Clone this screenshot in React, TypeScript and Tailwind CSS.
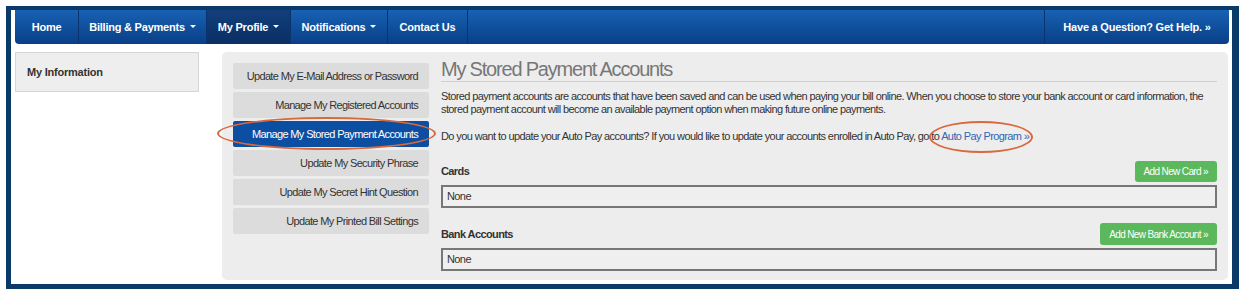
const subNav = [
  'Update My E-Mail Address or Password',
  'Manage My Registered Accounts',
  'Manage My Stored Payment Accounts',
  'Update My Security Phrase',
  'Update My Secret Hint Question',
  'Update My Printed Bill Settings',
]

const navItems = [
  { label: 'Home', w: 'w-[64px]', caret: false, active: false },
  { label: 'Billing & Payments', w: 'w-[128px]', caret: true, active: false },
  { label: 'My Profile', w: 'w-[84px]', caret: true, active: true },
  { label: 'Notifications', w: 'w-[97px]', caret: true, active: false },
  { label: 'Contact Us', w: 'w-[80px]', caret: false, active: false },
]

function Caret() {
  return <span className="inline-block ml-[5px] mb-[2px] w-0 h-0 border-x-[3px] border-x-transparent border-t-[3px] border-t-white align-middle" />
}

export default function App() {
  return (
    <div className="w-[1247px] h-[297px] bg-white pt-[6px] pl-[6px] font-['Liberation_Sans',Arial,sans-serif] tracking-[-0.64px] text-[#333]">
      <div className="w-[1233px] h-[283px] border-[#0b3a68] border-l-[5px] border-t-[4px] border-r-[7px] border-b-[5px] pl-[4px] pr-[3px]">
        {/* Top nav */}
        <div className="h-[34px] flex rounded-b-[4px] bg-gradient-to-b from-[#1861b4] to-[#0a3f86] text-white text-[11px] font-bold tracking-[-0.22px]">
          {navItems.map(item => (
            <div
              key={item.label}
              className={`${item.w} flex items-center justify-center border-r border-[#0a3370] ${item.active ? 'bg-gradient-to-b from-[#123f7c] to-[#0a2f63]' : ''}`}
            >
              {item.label}
              {item.caret && <Caret />}
            </div>
          ))}
          <div className="flex-1" />
          <div className="w-[185px] flex items-center justify-center border-l border-[#0a3370] rounded-br-[4px]">
            Have a Question? Get Help. »
          </div>
        </div>

        {/* Content */}
        <div className="flex mt-[8px]">
          <div className="w-[184px] h-[40px] bg-[#eeeeee] border border-[#d6d6d6] flex items-center pl-[11px] text-[11px] font-bold text-[#333] tracking-[-0.22px]">
            My Information
          </div>

          <div className="relative ml-[23px] w-[1006px] h-[228px] bg-[#ededed] rounded-[5px] pt-[5px] pl-[11px] pr-[11px] flex">
            {/* annotation ellipses */}
            <div className="absolute left-[-5px] top-[65px] w-[219px] h-[33px] rounded-[50%] border-2 border-[#d9683c]" />
            <div className="absolute left-[707px] top-[69px] w-[104px] h-[32px] rounded-[50%] border-2 border-[#d9683c]" />

            {/* Sub navigation */}
            <div className="w-[196px] mt-[6px] flex flex-col gap-[3px]">
              {subNav.map(label => {
                const active = label === 'Manage My Stored Payment Accounts'
                return (
                  <div
                    key={label}
                    className={`h-[26px] flex items-center justify-end pr-[11px] text-[11px] rounded-[2px] ${active ? 'bg-[#0c4fa2] text-white' : 'bg-[#dcdcdc] text-[#333]'}`}
                  >
                    {label}
                  </div>
                )
              })}
            </div>

            {/* Main column */}
            <div className="ml-[12px] w-[776px] tracking-[-0.6px]">
              <h1 className="h-[25px] text-[20px] leading-[24px] text-[#777] tracking-[-1.2px] border-b border-[#d0d0d0]">
                My Stored Payment Accounts
              </h1>
              <p className="mt-[8px] text-[11px] leading-[13px] text-[#333]">
                Stored payment accounts are accounts that have been saved and can be used when paying your bill online. When you choose to store your bank account or card information, the stored payment account will become an available payment option when making future online payments.
              </p>
              <p className="mt-[14px] text-[11px] leading-[13px] text-[#333]">
                Do you want to update your Auto Pay accounts? If you would like to update your accounts enrolled in Auto Pay, go to <span className="text-[#2f67b2]">Auto Pay Program »</span>
              </p>

              <div className="mt-[18px] h-[21px] flex items-center justify-between">
                <span className="text-[11px] font-bold">Cards</span>
                <button className="h-[21px] px-[9px] bg-[#5cb85c] rounded-[3px] text-white text-[10px] tracking-[-0.64px]">Add New Card »</button>
              </div>
              <div className="mt-[3px] h-[23px] border-2 border-[#777] bg-[#efefef] flex items-center pl-[4px] text-[11px]">None</div>

              <div className="mt-[15px] h-[22px] flex items-center justify-between">
                <span className="text-[11px] font-bold">Bank Accounts</span>
                <button className="h-[22px] px-[9px] bg-[#5cb85c] rounded-[3px] text-white text-[10px] tracking-[-0.64px]">Add New Bank Account »</button>
              </div>
              <div className="mt-[3px] h-[23px] border-2 border-[#777] bg-[#efefef] flex items-center pl-[4px] text-[11px]">None</div>
            </div>
          </div>
        </div>
      </div>
    </div>
  )
}
